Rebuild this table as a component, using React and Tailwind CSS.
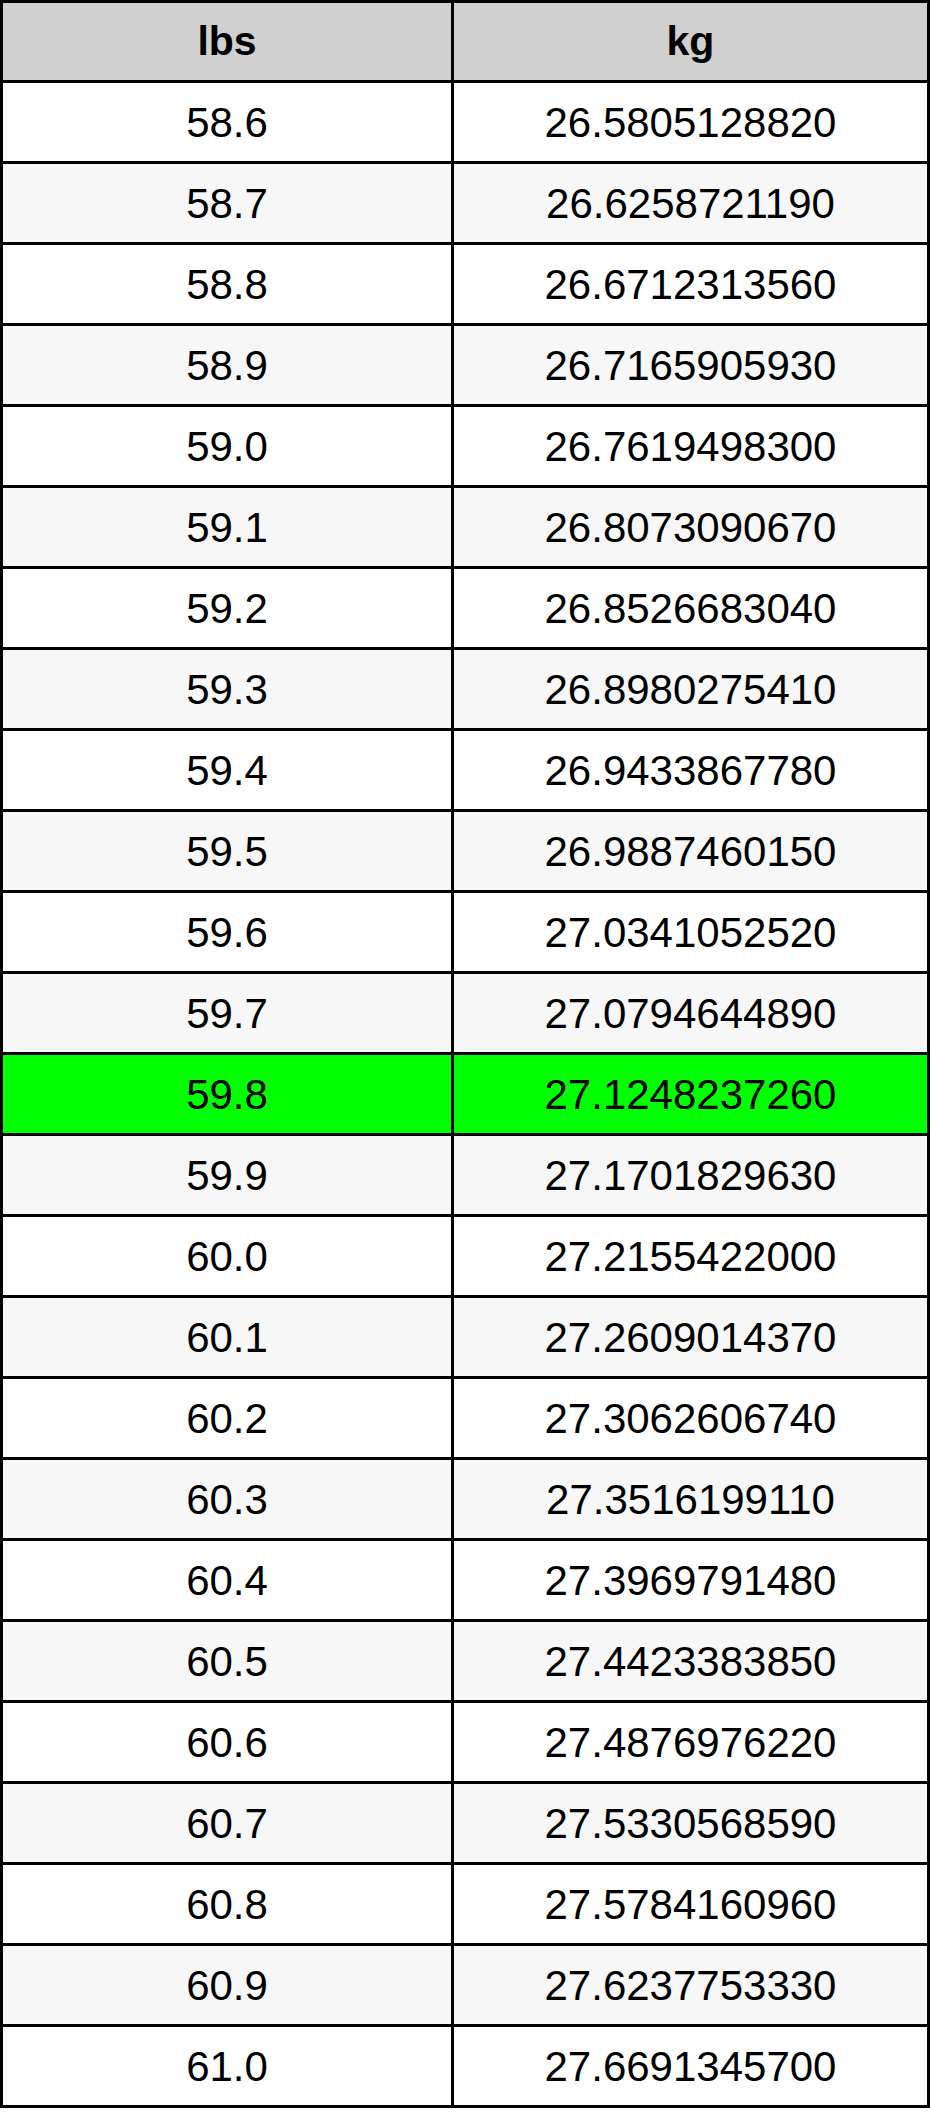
const rows = [
  ["58.6", "26.5805128820"],
  ["58.7", "26.6258721190"],
  ["58.8", "26.6712313560"],
  ["58.9", "26.7165905930"],
  ["59.0", "26.7619498300"],
  ["59.1", "26.8073090670"],
  ["59.2", "26.8526683040"],
  ["59.3", "26.8980275410"],
  ["59.4", "26.9433867780"],
  ["59.5", "26.9887460150"],
  ["59.6", "27.0341052520"],
  ["59.7", "27.0794644890"],
  ["59.8", "27.1248237260"],
  ["59.9", "27.1701829630"],
  ["60.0", "27.2155422000"],
  ["60.1", "27.2609014370"],
  ["60.2", "27.3062606740"],
  ["60.3", "27.3516199110"],
  ["60.4", "27.3969791480"],
  ["60.5", "27.4423383850"],
  ["60.6", "27.4876976220"],
  ["60.7", "27.5330568590"],
  ["60.8", "27.5784160960"],
  ["60.9", "27.6237753330"],
  ["61.0", "27.6691345700"],
];

export default function App() {
  return (
    <div className="w-[930px] bg-white font-['Liberation_Sans',Arial,sans-serif] text-black">
      <div className="grid grid-cols-[448px_473px] gap-[3px] bg-black p-[3px]">
        <div className="flex h-[77px] items-center justify-center bg-[#d0d0d0] text-[41px] font-bold">
          lbs
        </div>
        <div className="flex h-[77px] items-center justify-center bg-[#d0d0d0] text-[41px] font-bold">
          kg
        </div>
        {rows.map(([lbs, kg], i) => {
          const bg =
            lbs === "59.8"
              ? "bg-[#00ff00]"
              : i % 2 === 0
              ? "bg-white"
              : "bg-[#f7f7f7]";
          return [
            <div
              key={lbs + "a"}
              className={`flex h-[78px] items-center justify-center text-[42px] ${bg}`}
            >
              {lbs}
            </div>,
            <div
              key={lbs + "b"}
              className={`flex h-[78px] items-center justify-center text-[42px] ${bg}`}
            >
              {kg}
            </div>,
          ];
        })}
      </div>
    </div>
  );
}
